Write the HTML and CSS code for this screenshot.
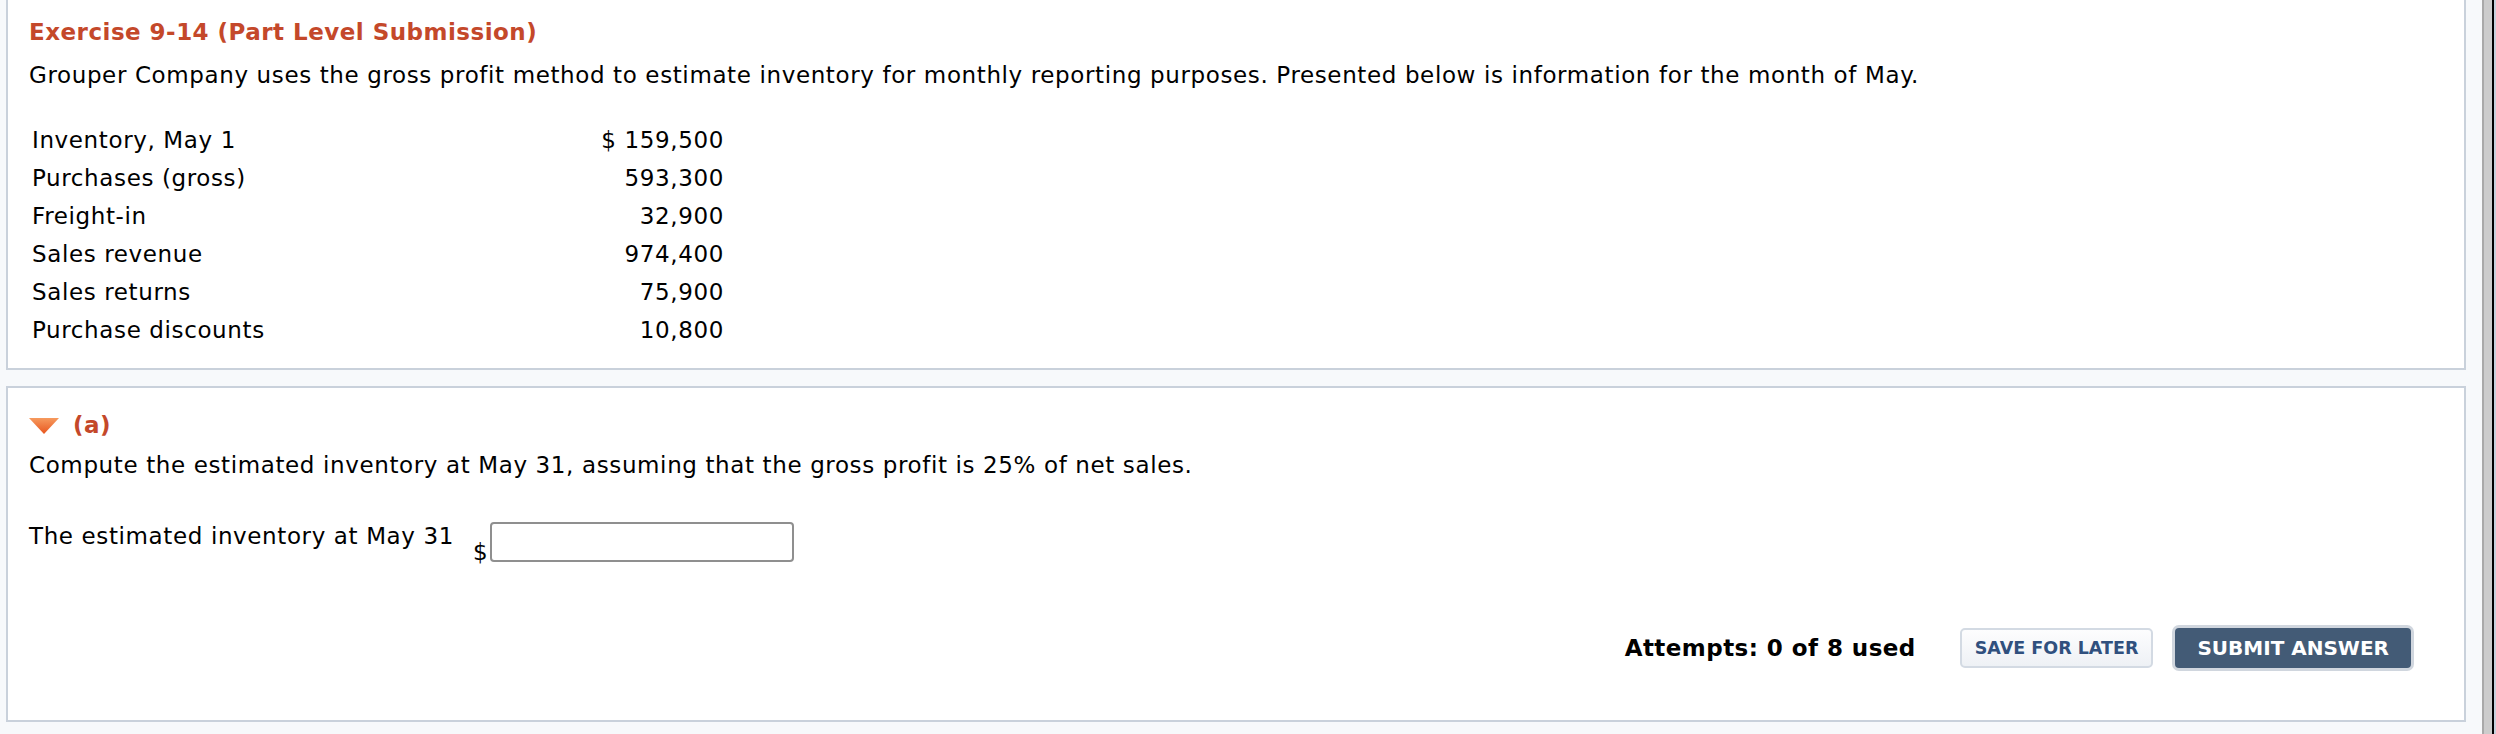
FILE: index.html
```html
<!DOCTYPE html>
<html lang="en">
<head>
<meta charset="utf-8">
<title>Exercise 9-14</title>
<link rel="stylesheet" href="styles.css">
</head>
<body>
<div class="page">
  <div class="main">
    <section class="panel panel-top">
      <h2 class="title">Exercise 9-14 (Part Level Submission)</h2>
      <p class="intro">Grouper Company uses the gross profit method to estimate inventory for monthly reporting purposes. Presented below is information for the month of May.</p>
      <table class="data">
        <tr><td class="lbl">Inventory, May 1</td><td class="val">$ 159,500</td></tr>
        <tr><td class="lbl">Purchases (gross)</td><td class="val">593,300</td></tr>
        <tr><td class="lbl">Freight-in</td><td class="val">32,900</td></tr>
        <tr><td class="lbl">Sales revenue</td><td class="val">974,400</td></tr>
        <tr><td class="lbl">Sales returns</td><td class="val">75,900</td></tr>
        <tr><td class="lbl">Purchase discounts</td><td class="val">10,800</td></tr>
      </table>
    </section>
    <section class="panel panel-part">
      <div class="part-head">
        <svg class="tri" width="30" height="16" viewBox="0 0 30 16">
          <defs>
            <linearGradient id="tg" x1="0" y1="0" x2="0" y2="1">
              <stop offset="0" stop-color="#f69a5e"/>
              <stop offset="1" stop-color="#e8561f"/>
            </linearGradient>
          </defs>
          <polygon points="0,0 30,0 15,16" fill="url(#tg)"/>
        </svg>
        <span class="part-label">(a)</span>
      </div>
      <p class="question">Compute the estimated inventory at May 31, assuming that the gross profit is 25% of net sales.</p>
      <div class="answer-row">
        <span class="answer-label">The estimated inventory at May 31</span>
        <span class="dollar">$</span>
        <input class="answer-input" type="text">
      </div>
      <div class="actions">
        <span class="attempts">Attempts: 0 of 8 used</span>
        <button class="btn btn-save">SAVE FOR LATER</button>
        <button class="btn btn-submit">SUBMIT ANSWER</button>
      </div>
    </section>
  </div>
  <div class="edge">
    <div class="edge-a"></div>
    <div class="edge-b"></div>
    <div class="edge-c"></div>
    <div class="edge-d"></div>
  </div>
</div>
</body>
</html>
```

FILE: styles.css
```css
html, body {
  margin: 0;
  padding: 0;
  background: #f7f9fb;
}
body {
  font-family: "DejaVu Sans", Verdana, sans-serif;
  font-size: 23px;
  letter-spacing: 0.62px;
  color: #000;
}
.page {
  display: flex;
  height: 734px;
  overflow: hidden;
}
.main {
  width: 2482px;
  padding-left: 6px;
  box-sizing: border-box;
  display: flex;
  flex-direction: column;
  gap: 16px;
}
.panel {
  width: 2460px;
  box-sizing: border-box;
  background: #fff;
  border: 2px solid #c9d1db;
}
.panel-top {
  border-top: none;
  height: 370px;
  padding: 18px 21px 0 21px;
}
.title {
  margin: 0;
  font-size: 23px;
  letter-spacing: 0.48px;
  line-height: 28px;
  font-weight: bold;
  color: #c4482a;
}
.intro {
  margin: 15px 0 0 0;
  line-height: 28px;
}
.data {
  border-collapse: collapse;
  margin-top: 32px;
  width: 695px;
}
.data td {
  padding: 0 0 0 3px;
  height: 38px;
  line-height: 28px;
}
.data .val {
  text-align: right;
  padding-left: 0;
}
.panel-part {
  height: 336px;
  padding: 23px 21px 0 21px;
}
.part-head {
  display: flex;
  align-items: center;
  gap: 14px;
  height: 28px;
}
.tri {
  display: block;
  margin-top: 2px;
}
.part-label {
  color: #c4482a;
  font-weight: bold;
  letter-spacing: 0.45px;
  line-height: 28px;
}
.question {
  margin: 12px 0 0 0;
  line-height: 28px;
}
.answer-row {
  display: flex;
  align-items: flex-start;
  margin-top: 43px;
  height: 40px;
}
.answer-label {
  line-height: 28px;
}
.dollar {
  margin-left: 19px;
  margin-top: 16px;
  line-height: 28px;
}
.answer-input {
  margin-left: 2px;
  width: 304px;
  height: 40px;
  box-sizing: border-box;
  border: 2px solid #8f8f8f;
  border-radius: 4px;
  background: #fff;
}
.actions {
  display: flex;
  align-items: center;
  justify-content: flex-end;
  margin-top: 64px;
  padding-right: 32px;
  height: 44px;
}
.attempts {
  font-weight: bold;
  letter-spacing: 0.45px;
  margin-right: 44px;
}
.btn {
  font-family: "DejaVu Sans", Verdana, sans-serif;
  font-weight: bold;
  letter-spacing: 0;
  cursor: pointer;
}
.btn-save {
  height: 40px;
  padding: 0 13px;
  font-size: 17.5px;
  color: #30507e;
  background: linear-gradient(#fdfdfe, #eef1f5);
  border: 2px solid #d3dae3;
  border-radius: 5px;
  margin-right: 22px;
}
.btn-submit {
  height: 40px;
  padding: 0 22px;
  font-size: 20px;
  color: #fff;
  background: #435b76;
  border: none;
  border-radius: 4px;
  box-shadow: 0 0 0 3px #d0d6de;
}
.edge {
  display: flex;
  width: 14px;
}
.edge-a { width: 2px; background: #a9a9a9; }
.edge-b { width: 8px; background: #cccccc; }
.edge-c { width: 2px; background: #000; }
.edge-d { width: 2px; background: #c8d0dc; }
```
